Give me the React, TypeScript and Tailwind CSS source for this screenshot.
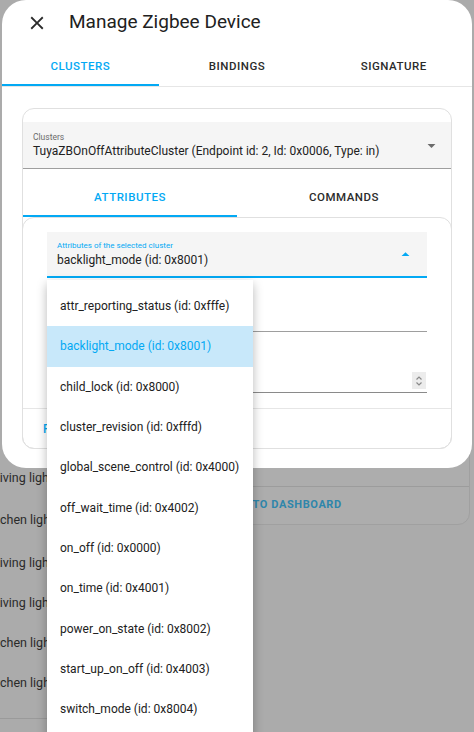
import React from 'react'

const font = { fontFamily: 'Roboto, "Noto Sans", sans-serif' }

const attributes = [
  'attr_reporting_status (id: 0xfffe)',
  'backlight_mode (id: 0x8001)',
  'child_lock (id: 0x8000)',
  'cluster_revision (id: 0xfffd)',
  'global_scene_control (id: 0x4000)',
  'off_wait_time (id: 0x4002)',
  'on_off (id: 0x0000)',
  'on_time (id: 0x4001)',
  'power_on_state (id: 0x8002)',
  'start_up_on_off (id: 0x4003)',
  'switch_mode (id: 0x8004)',
  'switch_type (id: 0x8005)',
]

const background = [
  { name: 'Living light', h: 'h-[40px]', ml: '-ml-[7px]' },
  { name: 'Kitchen light', h: 'h-[45px]', ml: '-ml-[15px]' },
  { name: 'Living light', h: 'h-[40px]', ml: '-ml-[7px]' },
  { name: 'Living light', h: 'h-[40px]', ml: '-ml-[7px]' },
  { name: 'Kitchen light', h: 'h-[40px]', ml: '-ml-[15px]' },
  { name: 'Kitchen light', h: 'h-[40px]', ml: '-ml-[15px]' },
]

const ArrowDrop: React.FC<{ up?: boolean; color: string }> = ({ up, color }) => (
  <svg width="19" height="19" viewBox="0 0 24 24" fill={color}>
    <path d={up ? 'M7 14l5-5 5 5z' : 'M7 10l5 5 5-5z'} />
  </svg>
)

const Tab: React.FC<{ label: string; active?: boolean; top?: string }> = ({ label, active, top }) => (
  <div className={`flex-1 flex flex-col ${top ?? ''}`}>
    <div
      className={`flex-1 flex items-center justify-center text-[11.5px] font-medium tracking-[0.5px] ${
        active ? 'text-[#03a9f4]' : 'text-[#2b2b2b]'
      }`}
    >
      {label}
    </div>
    <div className={`h-[2px] ${active ? 'bg-[#03a9f4]' : ''}`} />
  </div>
)

export default function App() {
  return (
    <div className="relative w-[474px] h-[732px] overflow-hidden bg-[#ababab]" style={font}>
      {/* page behind the scrim */}
      <div className="flex">
        <div className="w-[47px] pt-[458px] overflow-hidden">
          {background.map((b, i) => (
            <div key={i} className={`${b.h} ${b.ml} flex items-center whitespace-nowrap text-[12.5px] text-[#2a2a2a]`}>
              {b.name}
            </div>
          ))}
          <div className="mt-[15px] border-t border-[#9a9a9a]" />
        </div>
        <div className="flex-1">
          <div className="ml-[143px] mt-[300px] w-[280px] h-[225px] flex flex-col rounded-b-[12px] border border-[#a0a0a0] bg-[#adadad]">
            <div className="flex-1" />
            <div className="h-[38px] border-t border-[#9c9c9c] flex items-center pl-[35px] text-[11px] font-bold tracking-[0.6px] text-[#2f86ab]">
              ADD TO DASHBOARD
            </div>
          </div>
        </div>
      </div>

      {/* dialog */}
      <div className="absolute left-[2px] top-0 w-[470px] h-[468px] bg-white rounded-[24px] flex flex-col">
        <div className="h-[45px] flex items-center">
          <div className="w-[67px] flex justify-center pl-[2px]">
            <svg width="22" height="22" viewBox="0 0 24 24" fill="#2b2b2b">
              <path d="M19,6.41L17.59,5L12,10.59L6.41,5L5,6.41L10.59,12L5,17.59L6.41,19L12,13.41L17.59,19L19,17.59L13.41,12L19,6.41Z" />
            </svg>
          </div>
          <div className="text-[19px] text-[#212121]">Manage Zigbee Device</div>
        </div>
        <div className="h-[41px] flex">
          <Tab label="CLUSTERS" active top="pt-[5px]" />
          <Tab label="BINDINGS" top="pt-[5px]" />
          <Tab label="SIGNATURE" top="pt-[5px]" />
        </div>
        <div className="h-px bg-[#e6e6e6]" />

        <div className="px-[20px] pt-[21px]">
          <div className="h-[341px] border border-[#e0e0e0] rounded-[12px] pt-[13px] flex flex-col">
            <div className="h-[47px] bg-[#f5f5f5] border-b border-[#9e9e9e] flex items-center pl-[10px] pr-[10px]">
              <div className="flex-1 flex flex-col">
                <span className="text-[8.5px] leading-[12px] text-[#6b6b6b]">Clusters</span>
                <span className="text-[12px] leading-[16px] text-[#212121] whitespace-nowrap">
                  TuyaZBOnOffAttributeCluster (Endpoint id: 2, Id: 0x0006, Type: in)
                </span>
              </div>
              <ArrowDrop color="#6b6b6b" />
            </div>
            <div className="h-[48px] flex">
              <Tab label="ATTRIBUTES" active top="pt-[12px]" />
              <Tab label="COMMANDS" top="pt-[12px]" />
            </div>
            <div className="flex-1 -mx-px -mb-px border border-[#e0e0e0] rounded-[12px] flex flex-col">
              <div className="px-[24px] pt-[14px] flex-1 flex flex-col">
                <div className="h-[46px] bg-[#f5f5f5] border-b-2 border-[#03a9f4] flex items-center pl-[10px] pr-[12px]">
                  <div className="flex-1 flex flex-col">
                    <span className="text-[8px] leading-[12px] text-[#03a9f4]">Attributes of the selected cluster</span>
                    <span className="text-[12px] leading-[16px] text-[#212121]">backlight_mode (id: 0x8001)</span>
                  </div>
                  <ArrowDrop up color="#03a9f4" />
                </div>
                <div className="h-[54px] border-b-[1.5px] border-[#9e9e9e]" />
                <div className="h-[61px] border-b-[1.5px] border-[#8a8a8a] flex items-end justify-end pb-[3px]">
                  <div className="w-[14px] h-[17px] bg-[#ececec] flex items-center justify-center mr-[1px]">
                    <svg width="8" height="12" viewBox="0 0 8 12" fill="none" stroke="#8a8a8a" strokeWidth="1.2">
                      <path d="M1.5 4.5L4 2l2.5 2.5M1.5 7.5L4 10l2.5-2.5" />
                    </svg>
                  </div>
                </div>
              </div>
              <div className="h-[40px] mt-[2px] border-t border-[#e6e6e6] flex items-center pl-[20px] text-[12px] font-medium tracking-[1.4px] text-[#03a9f4]">
                READ ZIGBEE ATTRIBUTE
              </div>
            </div>
          </div>
        </div>
      </div>

      {/* open select menu */}
      <div className="absolute left-[47px] top-[280px] w-[206px] h-[480px] bg-white pt-[6px] shadow-[0_4px_10px_rgba(0,0,0,0.28)]">
        {attributes.map((a, i) => (
          <div
            key={a}
            className={`h-[40.3px] flex items-center pl-[13px] text-[12px] whitespace-nowrap ${
              i === 1 ? 'bg-[#c8e8fa] text-[#03a9f4]' : 'text-[#212121]'
            }`}
          >
            {a}
          </div>
        ))}
      </div>
    </div>
  )
}
